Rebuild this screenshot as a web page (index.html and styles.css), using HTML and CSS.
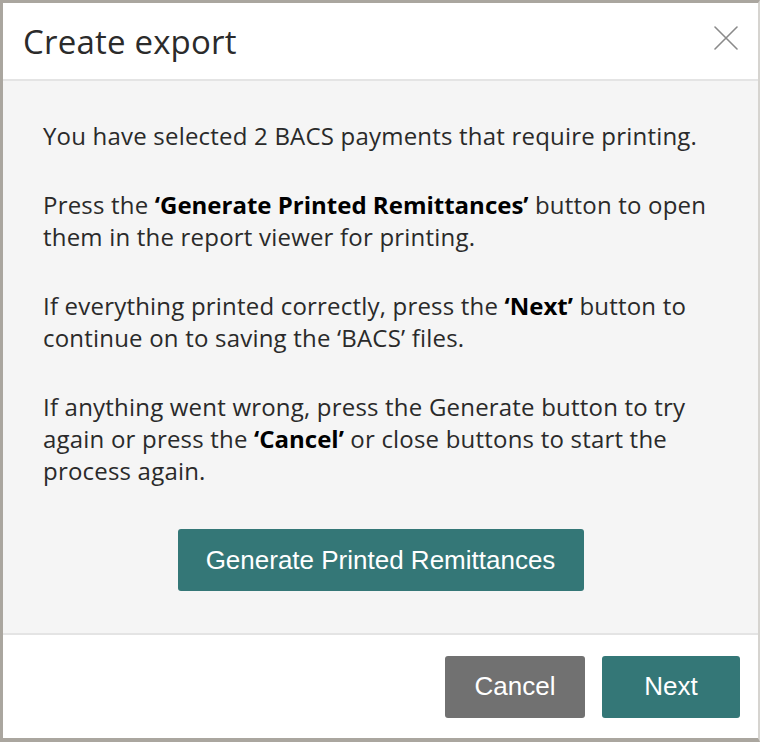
FILE: index.html
```html
<!DOCTYPE html>
<html lang="en">
<head>
<meta charset="utf-8">
<title>Create export</title>
<link rel="stylesheet" href="styles.css">
</head>
<body>
<div class="modal">
  <div class="modal-header">
    <h1 class="modal-title">Create export</h1>
    <button class="close" aria-label="Close">
      <svg width="24" height="24" viewBox="0 0 24 24"><path d="M1 1L23 23M23 1L1 23" stroke="#8a8a8a" stroke-width="1.6" stroke-linecap="round" fill="none"/></svg>
    </button>
  </div>
  <div class="modal-body">
    <p>You have selected 2 BACS payments that require printing.</p>
    <p>Press the <strong>‘Generate Printed Remittances’</strong> button to open them in the report viewer for printing.</p>
    <p>If everything printed correctly, press the <strong>‘Next’</strong> button to continue on to saving the ‘BACS’ files.</p>
    <p>If anything went wrong, press the Generate button to try again or press the <strong>‘Cancel’</strong> or close buttons to start the process again.</p>
    <div class="actions-center">
      <button class="btn btn-primary btn-generate">Generate Printed Remittances</button>
    </div>
  </div>
  <div class="modal-footer">
    <button class="btn btn-default">Cancel</button>
    <button class="btn btn-primary btn-next">Next</button>
  </div>
</div>
</body>
</html>
```
FILE: styles.css
```css
* { box-sizing: border-box; }
html, body { margin: 0; padding: 0; background: #fff; }
body { font-family: "Open Sans", "Noto Sans", sans-serif; color: #2a2a2a; }

.modal {
  width: 760px;
  height: 742px;
  border-top: 3px solid #aaa69f;
  border-left: 3px solid #aaa69f;
  border-bottom: 4px solid #aaa69f;
  border-right: 2px solid #d6d4d0;
  display: flex;
  flex-direction: column;
  background: #fff;
}

.modal-header {
  height: 78px;
  display: flex;
  align-items: center;
  justify-content: space-between;
  padding: 0 20px 0 20px;
  border-bottom: 2px solid #e4e4e4;
  background: #fff;
}
.modal-title {
  margin: 0;
  font-weight: 400;
  font-size: 33px;
  color: #2b2b2b;
  letter-spacing: 0.2px;
}
.close {
  background: none;
  border: 0;
  padding: 0;
  width: 24px;
  height: 24px;
  display: flex;
  margin-top: -6px;
}

.modal-body {
  flex: 1;
  background: #f5f5f5;
  padding: 39px 40px 40px 40px;
  font-size: 24px;
  line-height: 32px;
  letter-spacing: 0.2px;
}
.modal-body p { margin: 0 0 37px 0; }
.modal-body strong { font-weight: 700; color: #000; letter-spacing: 0; }

.actions-center {
  display: flex;
  justify-content: center;
  margin-top: 42px;
}

.modal-footer {
  border-top: 2px solid #e4e4e4;
  height: 105px;
  display: flex;
  justify-content: flex-end;
  align-items: center;
  gap: 17px;
  padding: 0 18px 0 0;
  background: #fff;
}

.btn {
  font-family: "Liberation Sans", Arial, sans-serif;
  font-size: 26px;
  color: #fff;
  border: 0;
  border-radius: 3px;
  height: 62px;
  padding: 0;
  white-space: nowrap;
  letter-spacing: 0;
  cursor: pointer;
}
.btn-primary { background: #347777; }
.btn-default { background: #717171; width: 140px; }
.btn-generate { width: 406px; }
.btn-next { width: 138px; }
```
